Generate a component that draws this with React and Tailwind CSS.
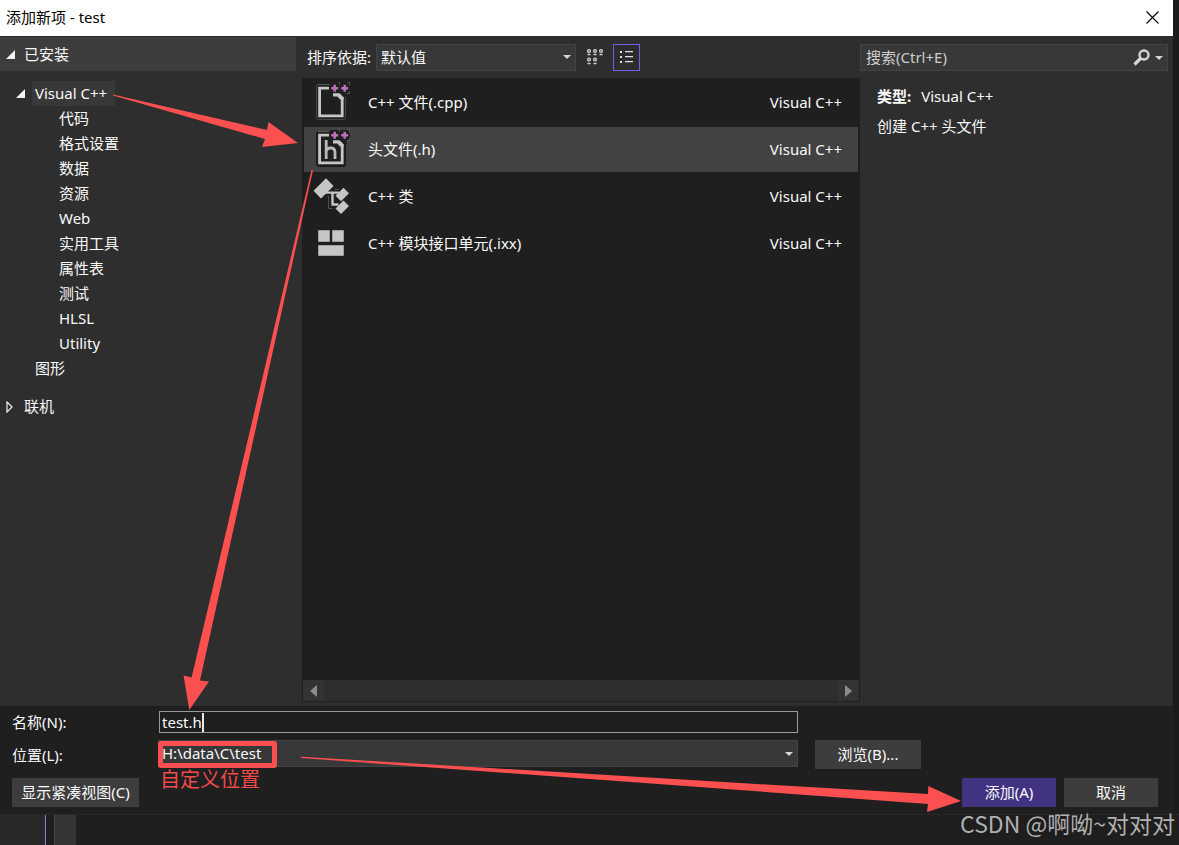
import { useState } from 'react';

const LANGUAGES = ['代码', '格式设置', '数据', '资源', 'Web', '实用工具', '属性表', '测试', 'HLSL', 'Utility'];

const CppFileIcon = ({ header }) => (
  <svg width="40" height="45" viewBox="0 0 40 45" fill="none">
    <rect x="5.500" y="4.500" width="29" height="35" rx="2" fill="#1f1f1f" stroke={header ? '#1a1a1a' : '#484848'} />
    <path d="M19 3h20v11h-3v3h-9l-8-6z" fill="#1f1f1f" />
    <path d="M7 4.500h11M28.500 4.500v-2h-1M38.500 5.500v-3h-2M38.500 11v2.500h-3" stroke="#5a5a5a" />
    <path d="M18 8.200H8.600v27.600h22.600V17" stroke="#c6c6c6" strokeWidth="2.800" />
    <path d="M22 13.300h6.500l4.100 4v2.200h-3.500l-2.800-3H22z" fill="#c6c6c6" />
    <path d="M23.700 4.800v7M20.200 8.300h7M33.700 4.800v7M30.200 8.300h7" stroke="#b96fb9" strokeWidth="2.500" />
    {header && (
      <path d="M15.200 13v19M15.200 25c0-2.600 2-4 4.600-4 2.700 0 4.200 1.500 4.200 4.500V32" stroke="#b8b8b8" strokeWidth="2.800" />
    )}
  </svg>
);

const ClassIcon = () => (
  <svg width="40" height="45" viewBox="0 0 40 45" fill="none">
    <path d="M17.500 22v12.500h4M24 15.500h4" stroke="#505050" />
    <path d="M14 18.600h14M21.500 18.500v12h6" stroke="#c6c6c6" strokeWidth="2.400" />
    <path d="M15 4.300 22.500 12 10 24.500 2.500 16.700zM32.500 13.800l5.500 5.500L30 27.300l-5.500-5.500zM32.500 26.500l5.500 5.500-8 8-5.500-5.500z" fill="#c6c6c6" />
  </svg>
);

const ModuleIcon = () => (
  <svg width="40" height="45" viewBox="0 0 40 45">
    <path d="M7.500 9.500h11v11h-11zM21.500 9.500h11v11h-11zM7.500 24.500h25v10h-25z" fill="#c6c6c6" stroke="#a0a0a0" />
  </svg>
);

const TEMPLATES = [
  { name: 'C++ 文件(.cpp)', icon: <CppFileIcon /> },
  { name: '头文件(.h)', icon: <CppFileIcon header /> },
  { name: 'C++ 类', icon: <ClassIcon /> },
  { name: 'C++ 模块接口单元(.ixx)', icon: <ModuleIcon /> },
];

const Expanded = () => (
  <svg width="9" height="9" viewBox="0 0 9 9" className="shrink-0">
    <path d="M9 0v9H0z" fill="#f1f1f1" />
  </svg>
);

const Collapsed = () => (
  <svg width="7" height="12" viewBox="0 0 7 12" className="shrink-0">
    <path d="M1 1v10L6 6z" fill="none" stroke="#f1f1f1" strokeWidth="1.200" />
  </svg>
);

const DropArrow = () => (
  <svg width="8" height="4" viewBox="0 0 8 4" className="pointer-events-none absolute right-[5px] top-1/2 -translate-y-1/2">
    <path d="M0 0h8L4 4z" fill="#d6d6d6" />
  </svg>
);

const TitleBar = () => (
  <header className="flex h-9 shrink-0 items-start justify-between bg-white pl-1.5 pr-[13px] pt-[5px] text-black">
    <h1>添加新项 - test</h1>
    <button type="button" aria-label="关闭" className="pt-[5px]">
      <svg width="15" height="15" viewBox="0 0 15 15">
        <path d="M1.500 1.500l12 12M13.500 1.500l-12 12" stroke="#000" strokeWidth="1.100" />
      </svg>
    </button>
  </header>
);

const CategoryTree = () => (
  <nav className="w-[302px] shrink-0 pr-1.5 pt-px">
    <button type="button" className="flex h-[34px] w-full items-center gap-[9px] bg-[#3d3d3d] pl-1.5">
      <Expanded />
      已安装
    </button>
    <div className="mt-2.5 flex items-center gap-[7px] pl-4">
      <Expanded />
      <button type="button" className="h-[25px] w-[83px] bg-[#383838] px-[3px] text-left">Visual C++</button>
    </div>
    <ul className="pl-[59px]">
      {LANGUAGES.map((name) => (
        <li key={name} className="h-[25px]">
          <button type="button">{name}</button>
        </li>
      ))}
    </ul>
    <button type="button" className="ml-[35px] block h-[25px]">图形</button>
    <button type="button" className="mt-[13px] flex h-[25px] items-center gap-[11px] pl-1.5">
      <Collapsed />
      联机
    </button>
  </nav>
);

const SortBar = () => (
  <div className="flex h-[42px] shrink-0 items-center pl-[5px]">
    <label htmlFor="sort" className="w-[69px]">排序依据:</label>
    <div className="relative">
      <select id="sort" className="h-[27px] w-[200px] appearance-none border border-[#434343] bg-[#383838] pl-1">
        <option>默认值</option>
      </select>
      <DropArrow />
    </div>
    <button type="button" aria-label="中等图标" className="ml-[9px] flex h-[27px] w-5 items-center justify-center">
      <svg width="18" height="18" viewBox="0 0 18 18" fill="none" stroke="#d0d0d0" strokeWidth="1.400">
        <circle cx="3" cy="3" r="1.400" />
        <circle cx="9" cy="3" r="1.400" />
        <circle cx="15" cy="3" r="1.400" />
        <circle cx="3" cy="11.500" r="1.400" />
        <circle cx="9" cy="11.500" r="1.400" />
        <path d="M1.500 6.500h3M7.500 6.500h3M13.500 6.500h3M1.500 15.500h3M7.500 15.500h3" />
      </svg>
    </button>
    <button type="button" aria-label="小图标" className="ml-2 flex h-[27px] w-[27px] items-center justify-center border border-[#7160e8] bg-[#2c2c2c]">
      <svg width="15" height="13" viewBox="0 0 15 13" fill="#e0e0e0">
        <path d="M1 0h2v2H1zM1 5h2v2H1zM1 10h2v2H1zM6 0h8v1.300H6zM6 5h8v1.300H6zM6 10h8v1.300H6z" />
      </svg>
    </button>
  </div>
);

const TemplateList = () => {
  const [selected, setSelected] = useState(1);

  return (
    <div className="flex flex-1 flex-col bg-[#1f1f1f]">
      <ul className="flex flex-1 flex-col gap-0.5 px-0.5 pt-0.5">
        {TEMPLATES.map((item, i) => (
          <li key={item.name}>
            <button
              type="button"
              onClick={() => setSelected(i)}
              className={`flex h-[45px] w-full items-center pl-[7px] pr-4 ${i === selected ? 'bg-[#424242]' : ''}`}
            >
              {item.icon}
              <span className="ml-[17px]">{item.name}</span>
              <span className="ml-auto">Visual C++</span>
            </button>
          </li>
        ))}
      </ul>
      <div className="mx-px mb-px flex h-[21px] items-stretch justify-between bg-[#2e2e2e]">
        <button type="button" aria-label="向左滚动" className="flex w-[21px] items-center justify-center bg-[#333]">
          <svg width="7" height="12" viewBox="0 0 7 12">
            <path d="M7 0v12L0 6z" fill="#8c8c8c" />
          </svg>
        </button>
        <button type="button" aria-label="向右滚动" className="flex w-[21px] items-center justify-center bg-[#333]">
          <svg width="7" height="12" viewBox="0 0 7 12">
            <path d="M0 0v12l7-6z" fill="#8c8c8c" />
          </svg>
        </button>
      </div>
    </div>
  );
};

const Details = () => (
  <aside className="w-[313px] shrink-0 pr-[5px] pt-2">
    <div className="flex h-[27px] items-center border border-[#434343] bg-[#383838] pl-[5px] pr-1">
      <input
        type="text"
        aria-label="搜索"
        placeholder="搜索(Ctrl+E)"
        className="min-w-0 flex-1 bg-transparent outline-none placeholder:text-[#cfcfcf]"
      />
      <button type="button" aria-label="开始搜索">
        <svg width="17" height="17" viewBox="0 0 17 17" fill="none" stroke="#d6d6d6">
          <circle cx="11" cy="6" r="4.500" strokeWidth="2.400" />
          <path d="M7.500 9.500 1.500 15.500" strokeWidth="3.200" />
        </svg>
      </button>
      <button type="button" aria-label="搜索选项" className="ml-[5px]">
        <svg width="8" height="4" viewBox="0 0 8 4">
          <path d="M0 0h8L4 4z" fill="#d6d6d6" />
        </svg>
      </button>
    </div>
    <p className="mt-[13px] pl-[17px]">
      <strong className="mr-2.5 font-bold">类型:</strong>
      Visual C++
    </p>
    <p className="mt-[5px] pl-[17px]">创建 C++ 头文件</p>
  </aside>
);

const Footer = () => {
  const [name, setName] = useState('test.h');

  return (
    <footer className="shrink-0 bg-[#1f1f1f] pb-[7px] pl-3 pr-[15px] pt-[5px]">
      <div className="flex items-center leading-[22px]">
        <label htmlFor="name" className="w-[147px] shrink-0">名称(N):</label>
        <div className="relative w-[639px]">
          <input
            id="name"
            type="text"
            value={name}
            onChange={(e) => setName(e.target.value)}
            className="block h-[22px] w-full border border-[#999] bg-[#1f1f1f] pl-0.5 outline-none"
          />
          <span className="absolute left-[43px] top-0.5 h-[19px] w-0.5 bg-[#e8e8e8]" />
        </div>
      </div>
      <div className="mt-[7px] flex items-start">
        <label htmlFor="location" className="w-[146px] shrink-0 pt-[3px]">位置(L):</label>
        <div className="relative w-[640px]">
          <select id="location" className="block h-[27px] w-full appearance-none border border-[#434343] bg-[#383838] pl-[3px]">
            <option>H:\data\C\test</option>
          </select>
          <DropArrow />
          <div className="pointer-events-none absolute left-0 top-px h-[27px] w-[119px] rounded-[3px] border-[5px] border-[#fc5050]" />
          <span className="absolute left-0.5 top-7 text-[20px] leading-6 text-[#f04a4a]">自定义位置</span>
        </div>
        <button type="button" className="ml-[17px] h-[29px] w-[106px] bg-[#3d3d3d]">浏览(B)...</button>
      </div>
      <div className="mt-[9px] flex items-center gap-2">
        <button type="button" className="mr-auto h-[29px] w-[127px] bg-[#3d3d3d]">显示紧凑视图(C)</button>
        <button type="submit" className="h-[29px] w-[94px] bg-[#413382]">添加(A)</button>
        <button type="button" className="h-[29px] w-[94px] bg-[#3d3d3d]">取消</button>
      </div>
    </footer>
  );
};

const Arrows = () => (
  <svg width="1179" height="845" viewBox="0 0 1179 845" className="pointer-events-none absolute left-0 top-0" fill="#fc5050">
    <path d="M113 94.500 267 130l1.500-8L298 143l-36 4 3-8L113 95.500z" />
    <path d="M311.500 170h1.500L200 680.500l9 1L189.300 710l-5.700-34.500 8 2z" />
    <path d="M301 756.700 740 783l188 11 .300-8L961 801l-34 11 1-8-188-14-439-32z" />
  </svg>
);

export default function App() {
  return (
    <div className="relative flex min-h-screen flex-col overflow-hidden bg-[#1b1b1b] font-['Noto_Sans','Noto_Sans_CJK_SC',sans-serif] text-[15px] leading-[25px] text-[#fafafa]">
      <main className="mr-1.5 flex flex-1 flex-col bg-[#2e2e2e]">
        <TitleBar />
        <div className="flex flex-1">
          <CategoryTree />
          <section className="flex min-w-0 flex-1 flex-col pb-1">
            <SortBar />
            <TemplateList />
          </section>
          <Details />
        </div>
        <Footer />
      </main>
      {/* strip of the editor window that shows below the dialog */}
      <div className="flex h-[31px] shrink-0 border-t border-[#2a2a2a] bg-[#1e1e1e]">
        <div className="w-[46px] border-r border-[#8f7fe0] bg-[#282828]" />
        <div className="ml-2 w-[22px] border-l border-[#444] bg-[#343434]" />
      </div>
      <Arrows />
      <div className="pointer-events-none absolute bottom-1.5 right-1 font-['Noto_Sans_CJK_SC',sans-serif] text-[23px] leading-8 text-[#b0b0b0]">
        CSDN @啊呦~对对对
      </div>
    </div>
  );
}
